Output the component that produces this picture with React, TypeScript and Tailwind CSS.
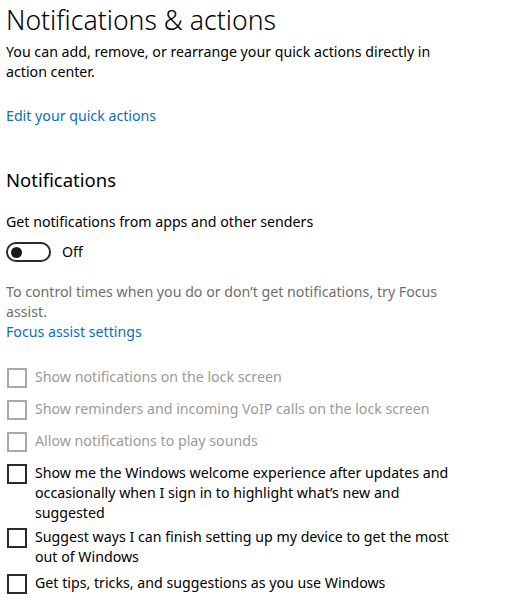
import React from "react";

const Check: React.FC<{ label: string; disabled?: boolean; className?: string }> = ({ label, disabled, className }) => (
  <label className={`flex items-start gap-[8px] ${className ?? ""}`}>
    <span
      className={`mt-[1px] h-[20px] w-[20px] shrink-0 border-2 ${disabled ? "border-[#a8a8a8]" : "border-[#2b2b2b]"}`}
    />
    <span className={`leading-[20px] ${disabled ? "text-[#9a9a9a]" : "text-black"}`}>{label}</span>
  </label>
);

const App: React.FC = () => {
  return (
    <div className="min-h-screen bg-white px-[6px] pt-[2px] text-[14.2px] text-black" style={{ fontFamily: '"Noto Sans", "Open Sans", sans-serif' }}>
      <div className="w-[452px]">
        <h1 className="text-[26.6px] font-light leading-[36px]">Notifications &amp; actions</h1>
        <p className="mt-[4px] leading-[20px]">
          You can add, remove, or rearrange your quick actions directly in action center.
        </p>
        <a className="mt-[24px] block leading-[20px] text-[#0a6ebd]">Edit your quick actions</a>

        <h2 className="mt-[40px] text-[18.5px] leading-[28px]">Notifications</h2>
        <p className="mt-[18px] leading-[20px]">Get notifications from apps and other senders</p>
        <div className="mt-[10px] flex items-center gap-[11px]">
          <span className="flex h-[20px] w-[45px] items-center rounded-full border-2 border-[#2b2b2b] px-[3px]">
            <span className="h-[11px] w-[11px] rounded-full bg-[#1a1a1a]" />
          </span>
          <span className="leading-[20px]">Off</span>
        </div>

        <p className="mt-[20px] leading-[20px] text-[#6e6e6e]">
          To control times when you do or don’t get notifications, try Focus assist.
        </p>
        <a className="block leading-[20px] text-[#0a6ebd]">Focus assist settings</a>

        <div className="mt-[25px] flex flex-col pl-[1px]">
          <Check disabled label="Show notifications on the lock screen" />
          <Check disabled className="mt-[11px]" label="Show reminders and incoming VoIP calls on the lock screen" />
          <Check disabled className="mt-[11px]" label="Allow notifications to play sounds" />
          <Check
            className="mt-[11px]"
            label="Show me the Windows welcome experience after updates and occasionally when I sign in to highlight what’s new and suggested"
          />
          <Check className="mt-[4px]" label="Suggest ways I can finish setting up my device to get the most out of Windows" />
          <Check className="mt-[6px]" label="Get tips, tricks, and suggestions as you use Windows" />
        </div>
      </div>
    </div>
  );
};

export default App;
